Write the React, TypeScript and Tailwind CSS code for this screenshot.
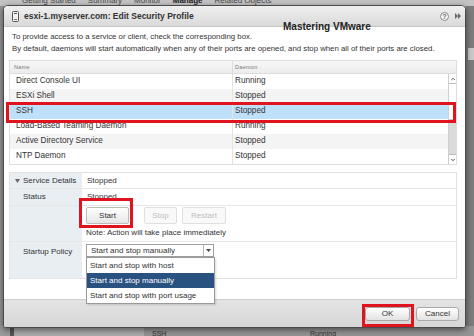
import { ChevronDown, ChevronUp } from "lucide-react";

const rows = [
  { name: "Direct Console UI", daemon: "Running", bg: "bg-white" },
  { name: "ESXi Shell", daemon: "Stopped", bg: "bg-[#f4f4f4]" },
  { name: "SSH", daemon: "Stopped", bg: "bg-[#bfe0fa]" },
  { name: "Load-Based Teaming Daemon", daemon: "Running", bg: "bg-white" },
  { name: "Active Directory Service", daemon: "Stopped", bg: "bg-[#f4f4f4]" },
  { name: "NTP Daemon", daemon: "Stopped", bg: "bg-white" },
];

const tabs = ["Getting Started", "Summary", "Monitor", "Manage", "Related Objects"];

const ServerIcon = () => (
  <svg width="7" height="11" viewBox="0 0 7 11" className="shrink-0">
    <rect x="0.5" y="0.5" width="6" height="10" rx="1" fill="#f2f2f2" stroke="#555" />
    <rect x="2" y="2" width="3" height="1" fill="#555" />
    <rect x="2" y="8" width="3" height="1" fill="#777" />
  </svg>
);

const App = () => {
  return (
    <div
      className="relative w-[474px] h-[336px] overflow-hidden bg-[#8d8d8d] text-[#333]"
      style={{ fontFamily: '"Liberation Sans", Arial, sans-serif' }}
    >
      {/* app behind the modal */}
      <div className="flex flex-col h-full">
        <div className="h-[6px] overflow-hidden bg-[#c4c4c4]">
          <div className="flex gap-[12px] pl-[22px] -mt-[4px] text-[8px] leading-[10px] text-[#444]">
            {tabs.map((t) => (
              <span key={t} className={t === "Manage" ? "font-bold text-[#222]" : ""}>
                {t}
              </span>
            ))}
          </div>
        </div>
        <div className="flex-1 flex">
          <div className="w-[12px] bg-[#959595]" />
          <div className="w-[10px] bg-[#6f6f6f]" />
          <div className="flex-1 bg-[#a3a3a3]" />
          <div className="w-[8px] bg-[#7d7d7d] flex flex-col pt-[42px]">
            <div className="h-[12px] bg-[#c9c9c9] ml-[2px]" />
          </div>
        </div>
        <div className="h-[10px] flex text-[7px] leading-[10px] text-[#333]">
          <div className="w-[10px] bg-[#9b9b9b]" />
          <div className="w-[4px] bg-[#555]" />
          <div className="w-[130px] bg-[#ababab]" />
          <div className="flex-1 bg-[#959595] pl-[8px] flex">
            <span className="w-[158px] pt-[3px]">SSH</span>
            <span className="pt-[3px]">Running</span>
          </div>
        </div>
      </div>

      {/* modal dialog */}
      <div className="absolute left-[3px] top-[5px] w-[463px] h-[323px] flex flex-col bg-white border border-[#4a4a4a] rounded-t-[5px] rounded-b-[3px] shadow-[0_2px_6px_rgba(0,0,0,0.5)] overflow-hidden">
        {/* title bar */}
        <div className="h-[21px] shrink-0 flex items-center gap-[5px] pl-[8px] pr-[4px] bg-gradient-to-b from-[#f0f0f0] to-[#d9d9d9] border-b border-[#c6c6c6]">
          <ServerIcon />
          <span className="text-[8.5px] font-bold text-[#333]">
            esxi-1.myserver.com: Edit Security Profile
          </span>
          <div className="ml-auto flex items-center gap-[6px]">
            <span className="w-[9px] h-[9px] rounded-full border border-[#888] bg-[#f8f8f8] text-[7px] leading-[7px] font-bold text-[#666] flex items-center justify-center">
              ?
            </span>
            <svg width="6" height="6" viewBox="0 0 6 6">
              <path d="M0 0 L3 3 L0 6 Z M3 0 L6 3 L3 6 Z" fill="#666" />
            </svg>
          </div>
        </div>

        {/* content */}
        <div className="flex-1 flex flex-col px-[5px] pt-[4px]">
          <div className="pl-[3px] text-[7.8px] leading-[12px] text-[#333]">
            <p>To provide access to a service or client, check the corresponding box.</p>
            <p>
              By default, daemons will start automatically when any of their ports are opened, and stop when all of their ports are closed.
            </p>
          </div>

          {/* services table */}
          <div className="mt-[5px] w-[448px] border border-[#dedede] flex flex-col">
            <div className="h-[13px] flex bg-gradient-to-b from-[#f7f7f7] to-[#ececec] border-b border-[#dcdcdc] text-[5.5px] text-[#777] tracking-[0.3px]">
              <div className="w-[223px] pl-[4px] flex items-center border-r border-[#dcdcdc]">Name</div>
              <div className="flex-1 pl-[2px] flex items-center">Daemon</div>
            </div>
            <div className="flex">
              <div className="flex-1 flex flex-col text-[8.2px]">
                {rows.map((r) => (
                  <div key={r.name} className={`h-[15px] flex items-center ${r.bg}`}>
                    <div className="w-[223px] pl-[6px] border-r border-[#e4e4e4] h-full flex items-center">
                      {r.name}
                    </div>
                    <div className="pl-[2px]">{r.daemon}</div>
                  </div>
                ))}
              </div>
              <div className="w-[8px] flex flex-col bg-[#dadada] border-l border-[#cfcfcf]">
                <div className="h-[10px] bg-white border-b border-[#bbb] flex items-center justify-center">
                  <ChevronUp size={6} strokeWidth={4} className="text-[#555]" />
                </div>
                <div className="h-[36px] bg-white border-b border-[#c8c8c8]" />
                <div className="flex-1" />
                <div className="h-[10px] bg-white border-t border-[#bbb] flex items-center justify-center">
                  <ChevronDown size={6} strokeWidth={4} className="text-[#555]" />
                </div>
              </div>
            </div>
          </div>

          {/* service details */}
          <div className="mt-[7px] w-[448px] border border-[#e2e2e2] flex flex-col text-[8px]">
            <div className="h-[16px] flex border-b border-[#e6e6e6]">
              <div className="w-[72px] bg-[#e9eef3] flex items-center pl-[5px] gap-[3px]">
                <svg width="5" height="4" viewBox="0 0 5 4">
                  <path d="M0 0 L5 0 L2.5 4 Z" fill="#666" />
                </svg>
                <span>Service Details</span>
              </div>
              <div className="flex-1 flex items-center pl-[5px]">Stopped</div>
            </div>
            <div className="h-[17px] flex border-b border-[#e6e6e6]">
              <div className="w-[72px] bg-[#e9eef3] flex items-center pl-[13px]">Status</div>
              <div className="flex-1 flex items-center pl-[5px]">Stopped</div>
            </div>
            <div className="h-[36px] flex border-b border-[#e6e6e6]">
              <div className="w-[72px] bg-[#e9eef3]" />
              <div className="flex-1 flex flex-col pl-[4px] pt-[1px]">
                <div className="flex gap-[5px]">
                  <button className="w-[43px] h-[17px] rounded-[2px] border border-[#bcbcbc] bg-gradient-to-b from-white to-[#e6e6e6] text-[8px] text-[#333]">
                    Start
                  </button>
                  <button className="ml-[10px] w-[33px] h-[17px] rounded-[2px] border border-[#e0e0e0] bg-[#f9f9f9] text-[8px] text-[#bdbdbd]">
                    Stop
                  </button>
                  <button className="w-[44px] h-[17px] rounded-[2px] border border-[#e0e0e0] bg-[#f9f9f9] text-[8px] text-[#bdbdbd]">
                    Restart
                  </button>
                </div>
                <div className="mt-[4px] leading-[10px]">Note: Action will take place immediately</div>
              </div>
            </div>
            <div className="h-[36px] flex">
              <div className="w-[72px] bg-[#e9eef3] pl-[13px] pt-[4px]">Startup Policy</div>
              <div className="flex-1 pl-[4px] pt-[2px]">
                <div className="relative w-[128px] h-[13px] border border-[#a0a0a0] bg-white flex items-center">
                  <span className="flex-1 pl-[4px]">Start and stop manually</span>
                  <span className="w-[10px] h-full border-l border-[#b5b5b5] flex items-center justify-center">
                    <svg width="5" height="3" viewBox="0 0 5 3">
                      <path d="M0 0 L5 0 L2.5 3 Z" fill="#444" />
                    </svg>
                  </span>
                  {/* open dropdown */}
                  <div className="absolute left-[-1px] top-[12px] w-[129px] flex flex-col border border-[#9a9a9a] bg-white shadow-[1px_1px_2px_rgba(0,0,0,0.15)] z-10">
                    <div className="h-[15px] pl-[3px] flex items-center">Start and stop with host</div>
                    <div className="h-[15px] pl-[3px] flex items-center bg-[#2a5281] text-white">Start and stop manually</div>
                    <div className="h-[15px] pl-[3px] flex items-center">Start and stop with port usage</div>
                  </div>
                </div>
              </div>
            </div>
          </div>
        </div>

        {/* footer */}
        <div className="h-[28px] shrink-0 flex items-center justify-end gap-[6px] pr-[6px] bg-gradient-to-b from-[#e4e4e4] to-[#d6d6d6] border-t border-[#cdcdcd]">
          <button className="w-[45px] h-[14px] rounded-[3px] border border-[#a9a9a9] bg-gradient-to-b from-white to-[#e2e2e2] text-[8px] text-[#333]">
            OK
          </button>
          <button className="w-[43px] h-[14px] rounded-[3px] border border-[#a9a9a9] bg-gradient-to-b from-white to-[#e2e2e2] text-[8px] text-[#333]">
            Cancel
          </button>
        </div>

        {/* watermark */}
        <div className="absolute left-[279px] top-[15px] text-[10px] leading-[12px] font-bold text-[#222]">
          Mastering VMware
        </div>

        {/* red highlight annotations */}
        <div className="absolute left-[2px] top-[96px] w-[450px] h-[21px] border-[3px] border-[#e0141e]" />
        <div className="absolute left-[75px] top-[192px] w-[54px] h-[30px] border-[3px] border-[#e0141e]" />
        <div className="absolute left-[358px] top-[298px] w-[52px] h-[23px] border-[3px] border-[#e0141e]" />
      </div>
    </div>
  );
};

export default App;
